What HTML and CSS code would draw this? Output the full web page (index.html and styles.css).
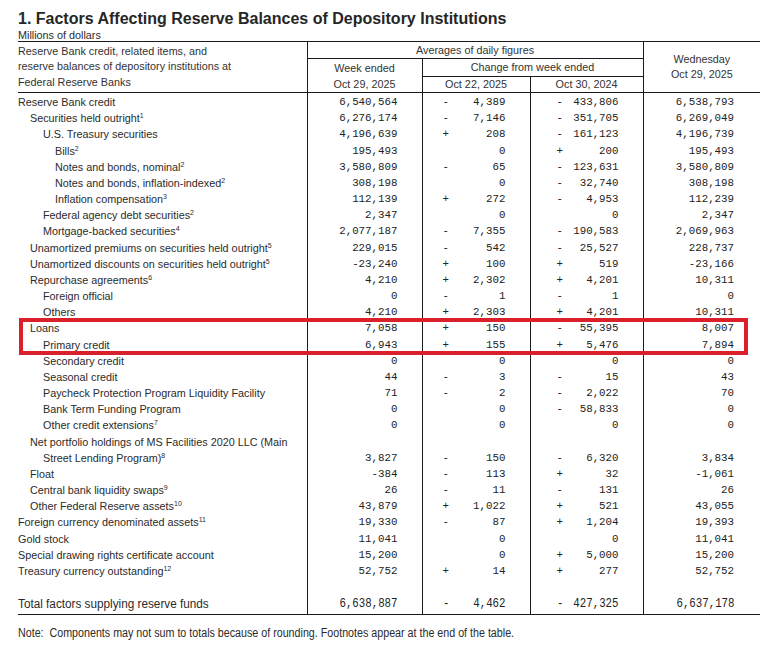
FILE: index.html
```html
<!DOCTYPE html>
<html lang="en">
<head>
<meta charset="utf-8">
<title>Factors Affecting Reserve Balances</title>
<link rel="stylesheet" href="styles.css">
</head>
<body>
<div class="page">
  <h1 class="title">1. Factors Affecting Reserve Balances of Depository Institutions</h1>
  <div class="units">Millions of dollars</div>
  <table class="h41">
    <colgroup>
      <col class="w-lab"><col class="w-c1"><col class="w-s2"><col class="w-v2"><col class="w-s3"><col class="w-v3"><col class="w-c4">
    </colgroup>
    <thead>
      <tr>
        <th class="hlab" rowspan="3">Reserve Bank credit, related items, and<br>reserve balances of depository institutions at<br>Federal Reserve Banks</th>
        <th class="hc bl bb" colspan="5">Averages of daily figures</th>
        <th class="hc hmulti bl" rowspan="3">Wednesday<br>Oct 29, 2025</th>
      </tr>
      <tr>
        <th class="hc hmulti2 bl" rowspan="2">Week ended<br>Oct 29, 2025</th>
        <th class="hc bl bb" colspan="4">Change from week ended</th>
      </tr>
      <tr>
        <th class="hc bl h3" colspan="2">Oct 22, 2025</th>
        <th class="hc bl h3" colspan="2">Oct 30, 2024</th>
      </tr>
    </thead>
    <tbody>
      <tr class="first"><td class="lab l0">Reserve Bank credit</td><td class="num bl">6,540,564</td><td class="sg bl">-</td><td class="num v2">4,389</td><td class="sg s3 bl">-</td><td class="num v3">433,806</td><td class="num c4 bl">6,538,793</td></tr>
      <tr><td class="lab l1">Securities held outright<sup class="fn">1</sup></td><td class="num bl">6,276,174</td><td class="sg bl">-</td><td class="num v2">7,146</td><td class="sg s3 bl">-</td><td class="num v3">351,705</td><td class="num c4 bl">6,269,049</td></tr>
      <tr><td class="lab l2">U.S. Treasury securities</td><td class="num bl">4,196,639</td><td class="sg bl">+</td><td class="num v2">208</td><td class="sg s3 bl">-</td><td class="num v3">161,123</td><td class="num c4 bl">4,196,739</td></tr>
      <tr><td class="lab l3">Bills<sup class="fn">2</sup></td><td class="num bl">195,493</td><td class="sg bl"></td><td class="num v2">0</td><td class="sg s3 bl">+</td><td class="num v3">200</td><td class="num c4 bl">195,493</td></tr>
      <tr><td class="lab l3">Notes and bonds, nominal<sup class="fn">2</sup></td><td class="num bl">3,580,809</td><td class="sg bl">-</td><td class="num v2">65</td><td class="sg s3 bl">-</td><td class="num v3">123,631</td><td class="num c4 bl">3,580,809</td></tr>
      <tr><td class="lab l3">Notes and bonds, inflation-indexed<sup class="fn">2</sup></td><td class="num bl">308,198</td><td class="sg bl"></td><td class="num v2">0</td><td class="sg s3 bl">-</td><td class="num v3">32,740</td><td class="num c4 bl">308,198</td></tr>
      <tr><td class="lab l3">Inflation compensation<sup class="fn">3</sup></td><td class="num bl">112,139</td><td class="sg bl">+</td><td class="num v2">272</td><td class="sg s3 bl">-</td><td class="num v3">4,953</td><td class="num c4 bl">112,239</td></tr>
      <tr><td class="lab l2">Federal agency debt securities<sup class="fn">2</sup></td><td class="num bl">2,347</td><td class="sg bl"></td><td class="num v2">0</td><td class="sg s3 bl"></td><td class="num v3">0</td><td class="num c4 bl">2,347</td></tr>
      <tr><td class="lab l2">Mortgage-backed securities<sup class="fn">4</sup></td><td class="num bl">2,077,187</td><td class="sg bl">-</td><td class="num v2">7,355</td><td class="sg s3 bl">-</td><td class="num v3">190,583</td><td class="num c4 bl">2,069,963</td></tr>
      <tr><td class="lab l1">Unamortized premiums on securities held outright<sup class="fn">5</sup></td><td class="num bl">229,015</td><td class="sg bl">-</td><td class="num v2">542</td><td class="sg s3 bl">-</td><td class="num v3">25,527</td><td class="num c4 bl">228,737</td></tr>
      <tr><td class="lab l1">Unamortized discounts on securities held outright<sup class="fn">5</sup></td><td class="num bl">-23,240</td><td class="sg bl">+</td><td class="num v2">100</td><td class="sg s3 bl">+</td><td class="num v3">519</td><td class="num c4 bl">-23,166</td></tr>
      <tr><td class="lab l1">Repurchase agreements<sup class="fn">6</sup></td><td class="num bl">4,210</td><td class="sg bl">+</td><td class="num v2">2,302</td><td class="sg s3 bl">+</td><td class="num v3">4,201</td><td class="num c4 bl">10,311</td></tr>
      <tr><td class="lab l2">Foreign official</td><td class="num bl">0</td><td class="sg bl">-</td><td class="num v2">1</td><td class="sg s3 bl">-</td><td class="num v3">1</td><td class="num c4 bl">0</td></tr>
      <tr><td class="lab l2">Others</td><td class="num bl">4,210</td><td class="sg bl">+</td><td class="num v2">2,303</td><td class="sg s3 bl">+</td><td class="num v3">4,201</td><td class="num c4 bl">10,311</td></tr>
      <tr><td class="lab l1">Loans</td><td class="num bl">7,058</td><td class="sg bl">+</td><td class="num v2">150</td><td class="sg s3 bl">-</td><td class="num v3">55,395</td><td class="num c4 bl">8,007</td></tr>
      <tr><td class="lab l2">Primary credit</td><td class="num bl">6,943</td><td class="sg bl">+</td><td class="num v2">155</td><td class="sg s3 bl">+</td><td class="num v3">5,476</td><td class="num c4 bl">7,894</td></tr>
      <tr><td class="lab l2">Secondary credit</td><td class="num bl">0</td><td class="sg bl"></td><td class="num v2">0</td><td class="sg s3 bl"></td><td class="num v3">0</td><td class="num c4 bl">0</td></tr>
      <tr><td class="lab l2">Seasonal credit</td><td class="num bl">44</td><td class="sg bl">-</td><td class="num v2">3</td><td class="sg s3 bl">-</td><td class="num v3">15</td><td class="num c4 bl">43</td></tr>
      <tr><td class="lab l2">Paycheck Protection Program Liquidity Facility</td><td class="num bl">71</td><td class="sg bl">-</td><td class="num v2">2</td><td class="sg s3 bl">-</td><td class="num v3">2,022</td><td class="num c4 bl">70</td></tr>
      <tr><td class="lab l2">Bank Term Funding Program</td><td class="num bl">0</td><td class="sg bl"></td><td class="num v2">0</td><td class="sg s3 bl">-</td><td class="num v3">58,833</td><td class="num c4 bl">0</td></tr>
      <tr><td class="lab l2">Other credit extensions<sup class="fn">7</sup></td><td class="num bl">0</td><td class="sg bl"></td><td class="num v2">0</td><td class="sg s3 bl"></td><td class="num v3">0</td><td class="num c4 bl">0</td></tr>
      <tr><td class="lab l1">Net portfolio holdings of MS Facilities 2020 LLC (Main</td><td class="num bl"></td><td class="sg bl"></td><td class="num v2"></td><td class="sg s3 bl"></td><td class="num v3"></td><td class="num c4 bl"></td></tr>
      <tr><td class="lab l2">Street Lending Program)<sup class="fn">8</sup></td><td class="num bl">3,827</td><td class="sg bl">-</td><td class="num v2">150</td><td class="sg s3 bl">-</td><td class="num v3">6,320</td><td class="num c4 bl">3,834</td></tr>
      <tr><td class="lab l1">Float</td><td class="num bl">-384</td><td class="sg bl">-</td><td class="num v2">113</td><td class="sg s3 bl">+</td><td class="num v3">32</td><td class="num c4 bl">-1,061</td></tr>
      <tr><td class="lab l1">Central bank liquidity swaps<sup class="fn">9</sup></td><td class="num bl">26</td><td class="sg bl">-</td><td class="num v2">11</td><td class="sg s3 bl">-</td><td class="num v3">131</td><td class="num c4 bl">26</td></tr>
      <tr><td class="lab l1">Other Federal Reserve assets<sup class="fn">10</sup></td><td class="num bl">43,879</td><td class="sg bl">+</td><td class="num v2">1,022</td><td class="sg s3 bl">+</td><td class="num v3">521</td><td class="num c4 bl">43,055</td></tr>
      <tr><td class="lab l0">Foreign currency denominated assets<sup class="fn">11</sup></td><td class="num bl">19,330</td><td class="sg bl">-</td><td class="num v2">87</td><td class="sg s3 bl">+</td><td class="num v3">1,204</td><td class="num c4 bl">19,393</td></tr>
      <tr><td class="lab l0">Gold stock</td><td class="num bl">11,041</td><td class="sg bl"></td><td class="num v2">0</td><td class="sg s3 bl"></td><td class="num v3">0</td><td class="num c4 bl">11,041</td></tr>
      <tr><td class="lab l0">Special drawing rights certificate account</td><td class="num bl">15,200</td><td class="sg bl"></td><td class="num v2">0</td><td class="sg s3 bl">+</td><td class="num v3">5,000</td><td class="num c4 bl">15,200</td></tr>
      <tr><td class="lab l0">Treasury currency outstanding<sup class="fn">12</sup></td><td class="num bl">52,752</td><td class="sg bl">+</td><td class="num v2">14</td><td class="sg s3 bl">+</td><td class="num v3">277</td><td class="num c4 bl">52,752</td></tr>
      <tr class="blank"><td class="lab"></td><td class="num bl"></td><td class="sg bl"></td><td class="num v2"></td><td class="sg s3 bl"></td><td class="num v3"></td><td class="num c4 bl"></td></tr>
      <tr class="total"><td class="lab l0"><span class="cond-lab">Total factors supplying reserve funds</span></td><td class="num bl"><span class="cond-r">6,638,887</span></td><td class="sg bl"><span class="cond">-</span></td><td class="num v2"><span class="cond-r">4,462</span></td><td class="sg s3 bl"><span class="cond">-</span></td><td class="num v3"><span class="cond-r">427,325</span></td><td class="num c4 bl"><span class="cond-r">6,637,178</span></td></tr>
    </tbody>
  </table>
  <p class="note">Note:&nbsp; Components may not sum to totals because of rounding. Footnotes appear at the end of the table.</p>
  <div class="highlight"></div>
</div>
</body>
</html>
```

FILE: styles.css
```css
html, body {
  margin: 0;
  padding: 0;
  background: #ffffff;
}

.page {
  position: relative;
  width: 764px;
  height: 657px;
  padding: 9px 0 0 18px;
  box-sizing: border-box;
  font-family: "Liberation Sans", Arial, sans-serif;
  color: #2b2b2b;
}

.title {
  margin: 0;
  font-size: 16px;
  line-height: 20px;
  font-weight: bold;
  color: #262626;
}

.units {
  font-size: 10.8px;
  line-height: 12px;
}

.h41 {
  border-collapse: collapse;
  table-layout: fixed;
  width: 742px;
  font-size: 10.8px;
}

.w-lab { width: 289px; }
.w-c1 { width: 115px; }
.w-s2 { width: 30px; }
.w-v2 { width: 78px; }
.w-s3 { width: 36px; }
.w-v3 { width: 77px; }
.w-c4 { width: 117px; }

thead {
  border-top: 1px solid #1a1a1a;
  border-bottom: 1px solid #1a1a1a;
}

th {
  font-weight: normal;
  padding: 0;
  color: #333;
}

.hlab {
  text-align: left;
  vertical-align: middle;
  line-height: 15.5px;
}

.hc {
  text-align: center;
  height: 16px;
  line-height: 16px;
}

.hmulti {
  line-height: 15px;
  vertical-align: middle;
  padding-bottom: 1px;
}

.hmulti2 {
  line-height: 16px;
  vertical-align: middle;
  padding-top: 1px;
}

.h3 {
  height: 15px;
  line-height: 15px;
}

.bl { border-left: 1px solid #1a1a1a; }
.bb { border-bottom: 1px solid #1a1a1a; }

td {
  padding: 0;
  height: 16.17px;
  line-height: 16.17px;
  white-space: nowrap;
  vertical-align: middle;
}

tr.first td {
  padding-top: 1px;
}

.lab {
  color: #2b2b2b;
}

.l0 { padding-left: 0; }
.l1 { padding-left: 12px; }
.l2 { padding-left: 25px; }
.l3 { padding-left: 37px; }

.num {
  font-family: "Liberation Mono", "Courier New", monospace;
  font-size: 10.8px;
  color: #222;
  text-align: right;
  padding-right: 24px;
}

.num.c4 { padding-right: 26px; }

.sg {
  font-family: "Liberation Mono", "Courier New", monospace;
  font-size: 10.8px;
  color: #222;
  text-align: left;
  padding-left: 20px;
}

.sg.s3 { padding-left: 26px; }

.fn {
  font-size: 7px;
  line-height: 0;
  vertical-align: 4px;
}

tr.total td {
  height: 19px;
  line-height: 19px;
  border-bottom: 1px solid #1a1a1a;
}

tr.total .lab {
  font-size: 12.5px;
}

tr.total .num,
tr.total .sg {
  font-size: 12.5px;
}

.cond-lab {
  display: inline-block;
  transform: scaleX(0.94);
  transform-origin: left center;
}

.cond {
  display: inline-block;
  transform: scaleX(0.86);
  transform-origin: left center;
}

.cond-r {
  display: inline-block;
  transform: scaleX(0.86);
  transform-origin: right center;
}

.note {
  margin: 11px 0 0 0;
  font-size: 12.5px;
  line-height: 14px;
  color: #2b2b2b;
  white-space: nowrap;
  transform: scaleX(0.856);
  transform-origin: left center;
}

.highlight {
  position: absolute;
  left: 19px;
  top: 318px;
  width: 729px;
  height: 37px;
  border: 4px solid #d9202b;
  box-sizing: border-box;
}
```
